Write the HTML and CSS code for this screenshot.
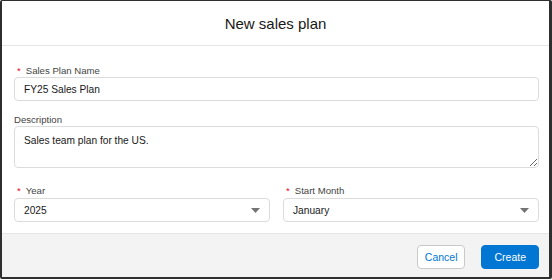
FILE: index.html
```html
<!DOCTYPE html>
<html lang="en">
<head>
    <meta charset="UTF-8">
    <meta name="viewport" content="width=device-width, initial-scale=1.0">
    <title>New sales plan</title>
    <link rel="stylesheet" href="styles.css">
</head>
<body>
    <div class="modal">
        <div class="modal-header">
            <h2>New sales plan</h2>
        </div>

        <form class="modal-body" id="plan-form">
            <div class="field">
                <label for="plan-name"><abbr class="required" title="required">*</abbr>Sales Plan Name</label>
                <input type="text" id="plan-name" name="plan-name" value="FY25 Sales Plan">
            </div>
            <div class="field field-textarea">
                <label for="description">Description</label>
                <textarea id="description" name="description">Sales team plan for the US.</textarea>
            </div>
            <div class="field-row">
                <div class="field">
                    <label for="year"><abbr class="required" title="required">*</abbr>Year</label>
                    <button type="button" class="combobox" id="year">
                        <span>2025</span>
                        <svg width="9" height="5" viewBox="0 0 9 5"><path d="M0 0h9L4.5 5z" fill="#747474"/></svg>
                    </button>
                </div>
                <div class="field">
                    <label for="start-month"><abbr class="required" title="required">*</abbr>Start Month</label>
                    <button type="button" class="combobox" id="start-month">
                        <span>January</span>
                        <svg width="9" height="5" viewBox="0 0 9 5"><path d="M0 0h9L4.5 5z" fill="#747474"/></svg>
                    </button>
                </div>
            </div>
        </form>

        <div class="modal-footer">
            <button type="button" class="btn btn-neutral">Cancel</button>
            <button type="submit" form="plan-form" class="btn btn-brand">Create</button>
        </div>
    </div>
</body>
</html>
```

FILE: styles.css
```css
body {
    margin: 0;
    font-family: "Liberation Sans", Arial, sans-serif;
    background-color: #fff;
    color: #181818;
}
.modal {
    width: 552px;
    height: 279px;
    box-sizing: border-box;
    border: 2px solid #2e2e2e;
    border-top-width: 1px;
    border-right-width: 3px;
    border-radius: 2px;
    display: flex;
    flex-direction: column;
    background-color: #fff;
}
.modal-header {
    height: 44px;
    border-bottom: 1px solid #e5e5e5;
    display: flex;
    align-items: center;
    justify-content: center;
}
.modal-header h2 {
    margin: 0;
    font-size: 15px;
    font-weight: normal;
    color: #181818;
}
.modal-body {
    padding: 18px 10px 11px 12px;
}
.field label {
    display: block;
    height: 13px;
    line-height: 13px;
    font-size: 9.6px;
    color: #444;
}
.required {
    color: #ea001e;
    text-decoration: none;
    border: none;
    margin: 0 5px 0 3px;
}
.field input,
.field textarea,
.combobox {
    display: block;
    width: 100%;
    box-sizing: border-box;
    border: 1px solid #dcdcdc;
    border-radius: 4px;
    background-color: #fff;
    font-family: inherit;
    font-size: 10.2px;
    color: #181818;
    margin: 0;
}
.field input {
    height: 24px;
    padding: 0 9px;
    margin-bottom: 12px;
}
.field textarea {
    height: 42px;
    padding: 7px 9px 4px;
    line-height: 14px;
    resize: vertical;
    margin-bottom: 16px;
}
.field-row {
    display: grid;
    grid-template-columns: 1fr 1fr;
    gap: 13px;
}
.combobox {
    height: 24px;
    margin-top: 1px;
    padding: 0 9px 0 9px;
    display: flex;
    align-items: center;
    justify-content: space-between;
    text-align: left;
    cursor: pointer;
}
.modal-footer {
    border-top: 1px solid #e5e5e5;
    background-color: #f3f3f3;
    padding: 11px 10px 8px;
    display: flex;
    justify-content: flex-end;
    gap: 16px;
    flex: 1;
}
.btn {
    height: 24px;
    border-radius: 4px;
    font-family: inherit;
    font-size: 10.5px;
    cursor: pointer;
}
.btn-neutral {
    padding: 0 7px;
    background-color: #fff;
    border: 1px solid #c9c9c9;
    color: #0176d3;
}
.btn-brand {
    padding: 0 12px;
    background-color: #0176d3;
    border: 1px solid #0176d3;
    color: #fff;
}
.btn-brand:hover {
    background-color: #014486;
}
```
